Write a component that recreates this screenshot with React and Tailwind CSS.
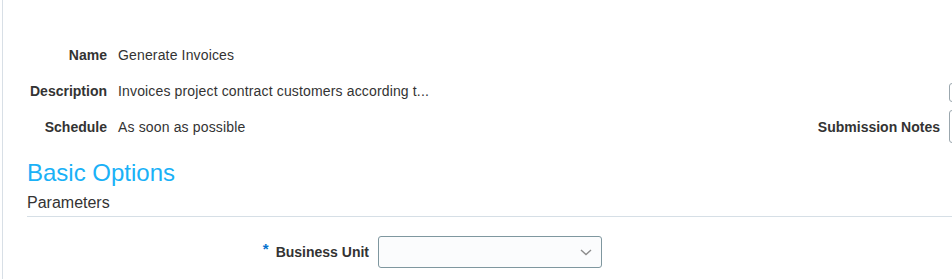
import { useState } from 'react';

function ChevronDown() {
    return (
        <svg width="12" height="7" viewBox="0 0 12 7" fill="none">
            <polyline points="1,1 6,5.5 11,1" stroke="#8c8c8c" strokeWidth="1.4" />
        </svg>
    )
}

function InfoRow({ label, value }) {
    return (
        <div className="flex h-[36px] items-center">
            <div className="w-[104px] text-right text-[14px] font-bold text-[#333333]">{label}</div>
            <div className="ml-[11px] text-[14px] tracking-[0.15px] text-[#333333] whitespace-nowrap">{value}</div>
        </div>
    )
}

function App() {
    const [businessUnit, setBusinessUnit] = useState('')

    return (
        <div className="h-[279px] w-[952px] overflow-hidden bg-white font-['Liberation_Sans',Arial,sans-serif]">
            <div className="ml-[2px] h-full border-l border-[#d8dfe6]">
                {/* Header info */}
                <div className="flex w-[1146px] pt-[37px]">
                    <div className="flex flex-col">
                        <InfoRow label="Name" value="Generate Invoices" />
                        <InfoRow label="Description" value="Invoices project contract customers according t..." />
                        <InfoRow label="Schedule" value="As soon as possible" />
                    </div>
                    <div className="ml-auto flex flex-col">
                        <div className="h-[36px]" />
                        <div className="flex h-[36px] items-start">
                            <div className="w-[123px]" />
                            <div className="ml-[9px] mt-[10px] h-[19px] w-[200px] rounded-[3px] border border-[#9ba7ae] bg-white" />
                        </div>
                        <div className="flex h-[36px] items-start">
                            <div className="flex h-[36px] w-[123px] items-center justify-end text-[14px] font-bold text-[#333333] whitespace-nowrap">Submission Notes</div>
                            <div className="ml-[9px] mt-[1px] h-[33px] w-[200px] rounded-[3px] border border-[#9ba7ae] bg-white" />
                        </div>
                    </div>
                </div>

                {/* Basic options */}
                <div className="pl-6">
                    <h2 className="mt-[14px] h-[28px] text-[24px] leading-[28px] text-[#1ab1f7]">Basic Options</h2>
                    <div className="mt-[7px] border-b border-[#d6dfe6] pb-[4px]">
                        <div className="h-[18px] text-[16px] leading-[18px] text-[#333333]">Parameters</div>
                    </div>
                    <div className="mt-[19px] flex h-[32px] items-center">
                        <div className="flex w-[342px] items-center justify-end text-[14px] font-bold text-[#333333]">
                            <span className="mr-[7px] -mt-[6px] text-[15px] text-[#0572ce]">*</span>
                            <span>Business Unit</span>
                        </div>
                        <div className="relative ml-[9px] h-[32px] w-[224px]">
                            <select
                                value={businessUnit}
                                onChange={(e) => setBusinessUnit(e.target.value)}
                                className="h-full w-full appearance-none rounded-[3px] border border-[#7f979f] bg-[#fbfcfd] px-2 text-[14px] text-[#333333] outline-none"
                            >
                                <option value=""></option>
                            </select>
                            <div className="pointer-events-none absolute right-[10px] top-[13px]">
                                <ChevronDown />
                            </div>
                        </div>
                    </div>
                </div>
            </div>
        </div>
    )
}

export default App
